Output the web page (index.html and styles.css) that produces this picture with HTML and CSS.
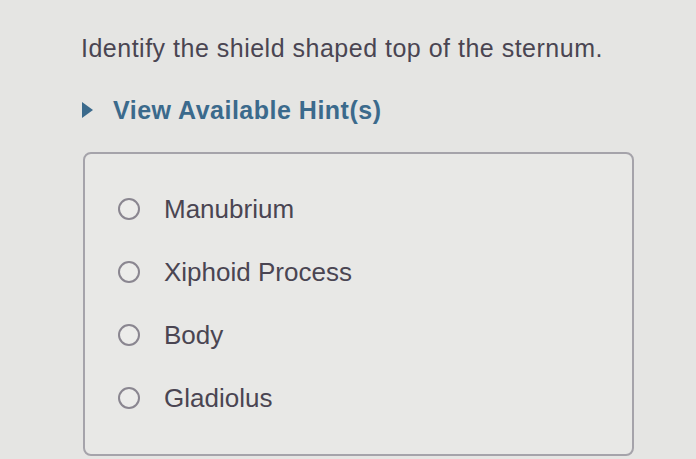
FILE: index.html
```html
<!DOCTYPE html>
<html>
<head>
<meta charset="utf-8">
<link rel="stylesheet" href="styles.css">
</head>
<body>
<div class="page">
  <p class="question">Identify the shield shaped top of the sternum.</p>
  <div class="hint">
    <svg class="caret" width="11" height="16" viewBox="0 0 11 16"><path d="M0 0 L11 8 L0 16 Z" fill="#3b6a8c"/></svg>
    <span>View Available Hint(s)</span>
  </div>
  <div class="choices">
    <label class="choice"><span class="radio"></span><span>Manubrium</span></label>
    <label class="choice"><span class="radio"></span><span>Xiphoid Process</span></label>
    <label class="choice"><span class="radio"></span><span>Body</span></label>
    <label class="choice"><span class="radio"></span><span>Gladiolus</span></label>
  </div>
</div>
</body>
</html>
```
FILE: styles.css
```css
html, body {
  margin: 0;
  padding: 0;
  background: #e5e5e3;
  width: 696px;
  height: 459px;
  overflow: hidden;
}
.page {
  font-family: "Liberation Sans", Arial, sans-serif;
  padding: 33px 0 0 81px;
}
.question {
  margin: 0;
  font-size: 25px;
  letter-spacing: 0.5px;
  color: #4a4552;
  line-height: 30px;
}
.hint {
  display: flex;
  align-items: center;
  margin-top: 32px;
  margin-left: 1px;
  gap: 20px;
  color: #3b6a8c;
  font-weight: bold;
  font-size: 25px;
  letter-spacing: 0.5px;
  line-height: 30px;
}
.choices {
  margin-top: 27px;
  margin-left: 2px;
  width: 551px;
  height: 304px;
  border: 2px solid #a5a3aa;
  border-radius: 8px;
  background: #e8e8e6;
  box-sizing: border-box;
  padding-top: 40px;
  padding-left: 33px;
  display: flex;
  flex-direction: column;
  gap: 33px;
}
.choice {
  display: flex;
  align-items: center;
  gap: 24px;
  font-size: 26px;
  line-height: 30px;
  color: #4a4552;
}
.radio {
  width: 22px;
  height: 22px;
  border: 2.5px solid #8a8690;
  border-radius: 50%;
  box-sizing: border-box;
  background: #ececea;
  flex: none;
}
```
